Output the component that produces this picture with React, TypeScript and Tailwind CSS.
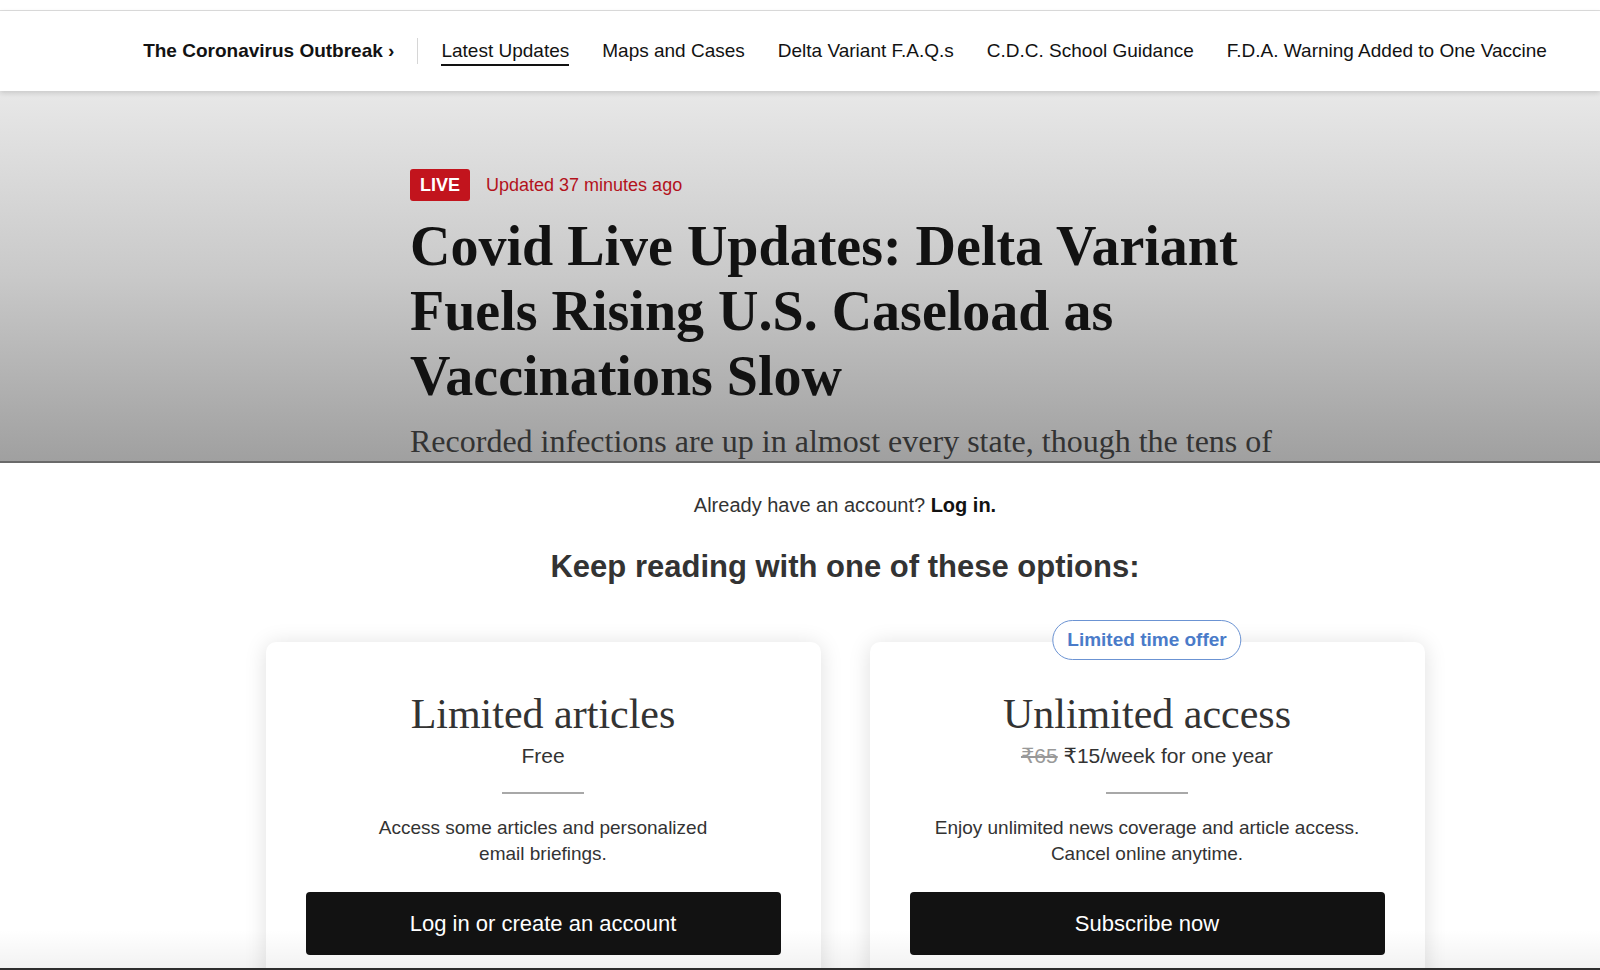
const SANS = { fontFamily: '"Liberation Sans", "DejaVu Sans", Arial, sans-serif' };

const NAV_LINKS = ['Maps and Cases', 'Delta Variant F.A.Q.s', 'C.D.C. School Guidance', 'F.D.A. Warning Added to One Vaccine'];

function TopNav() {
  return (
    <header className="relative z-10 h-[80px] bg-white shadow-[0_2px_5px_rgba(0,0,0,0.14)]">
      <nav className="ml-[90px] flex h-full items-center justify-center text-[19px] text-[#121212]">
        <span className="font-bold">The Coronavirus Outbreak ›</span>
        <span className="mx-[23px] h-[26px] w-px bg-[#d6d6d6]" />
        <span className="border-b-2 border-[#121212] pt-[2px] leading-[26px]">Latest Updates</span>
        {NAV_LINKS.map((l) => (
          <span key={l} className="ml-[33px]">
            {l}
          </span>
        ))}
      </nav>
    </header>
  );
}

function Hero() {
  return (
    <section className="h-[372px] overflow-hidden border-b-2 border-[#6a6a6a] bg-gradient-to-b from-[#e8e8e8] via-[#c9c9c9] to-[#a0a0a0]">
      <div className="ml-[90px] flex justify-center">
        <div className="w-[870px] pt-[78px]">
          <div className="flex items-center gap-[16px]" style={SANS}>
            <span className="flex h-[32px] items-center rounded-[3px] bg-[#c2141d] px-[10px] text-[18px] font-bold text-white">
              LIVE
            </span>
            <span className="text-[18px] text-[#b3121c]">Updated 37 minutes ago</span>
          </div>
          <h1
            className="mt-[13px] max-w-[860px] text-[56px] font-bold leading-[65px] text-[#121212]"
            style={{ fontFamily: '"Liberation Serif", "Times New Roman", serif' }}
          >
            Covid Live Updates: Delta Variant Fuels Rising U.S. Caseload as Vaccinations Slow
          </h1>
          <p
            className="mt-[12px] max-w-[890px] text-[32px] leading-[40px] text-[#333]"
            style={{ fontFamily: '"Liberation Serif", "Times New Roman", serif' }}
          >
            Recorded infections are up in almost every state, though the tens of millions of vaccinated Americans
            are largely protected.
          </p>
        </div>
      </div>
    </section>
  );
}

function PlanCard({
  title,
  price,
  lines,
  cta,
  badge,
}: {
  title: string;
  price: React.ReactNode;
  lines: string[];
  cta: string;
  badge?: string;
}) {
  return (
    <div className="relative w-[555px] rounded-[10px] bg-white px-10 pt-[48px] pb-10 text-center shadow-[0_2px_22px_rgba(0,0,0,0.13)]">
      {badge && (
        <span className="absolute -top-[22px] left-1/2 flex h-[40px] -translate-x-1/2 items-center rounded-full border-[1.5px] border-[#6b93d3] bg-white px-[14px] text-[19px] font-bold text-[#4a7bc9]">
          {badge}
        </span>
      )}
      <h3
        className="text-[42px] leading-[48px] text-[#333]"
        style={{ fontFamily: '"Liberation Serif", "Times New Roman", serif' }}
      >
        {title}
      </h3>
      <div className="mt-[4px] text-[21px] leading-[28px] text-[#333]">{price}</div>
      <div className="mx-auto mt-[22px] h-[2px] w-[82px] bg-[#a8a8a8]" />
      <p className="mt-[21px] text-[19px] leading-[26px] text-[#333]">
        {lines.map((l) => (
          <span key={l} className="block">
            {l}
          </span>
        ))}
      </p>
      <button className="mt-[25px] h-[63px] w-full rounded-[4px] bg-[#121212] text-[22px] text-white">{cta}</button>
    </div>
  );
}

export default function App() {
  return (
    <div className="relative h-[970px] w-[1600px] overflow-hidden bg-white" style={SANS}>
      <div className="h-[11px] border-b border-[#dedede] bg-white" />
      <TopNav />
      <Hero />
      <main className="ml-[90px] flex flex-col items-center">
        <p className="mt-[28px] text-[20px] leading-[28px] text-[#333]">
          Already have an account? <b className="text-[#121212]">Log in.</b>
        </p>
        <h2 className="mt-[30px] text-[31px] font-bold leading-[36px] text-[#333]">
          Keep reading with one of these options:
        </h2>
        <div className="mt-[57px] flex gap-[49px]">
          <PlanCard
            title="Limited articles"
            price="Free"
            lines={['Access some articles and personalized', 'email briefings.']}
            cta="Log in or create an account"
          />
          <PlanCard
            title="Unlimited access"
            badge="Limited time offer"
            price={
              <>
                <span className="text-[#999] line-through">₹65</span> ₹15/week for one year
              </>
            }
            lines={['Enjoy unlimited news coverage and article access.', 'Cancel online anytime.']}
            cta="Subscribe now"
          />
        </div>
      </main>
      <div className="pointer-events-none absolute inset-x-0 bottom-0 h-[40px] border-b-2 border-[#2e2e2e] bg-gradient-to-b from-transparent to-[rgba(0,0,0,0.05)]" />
    </div>
  );
}
